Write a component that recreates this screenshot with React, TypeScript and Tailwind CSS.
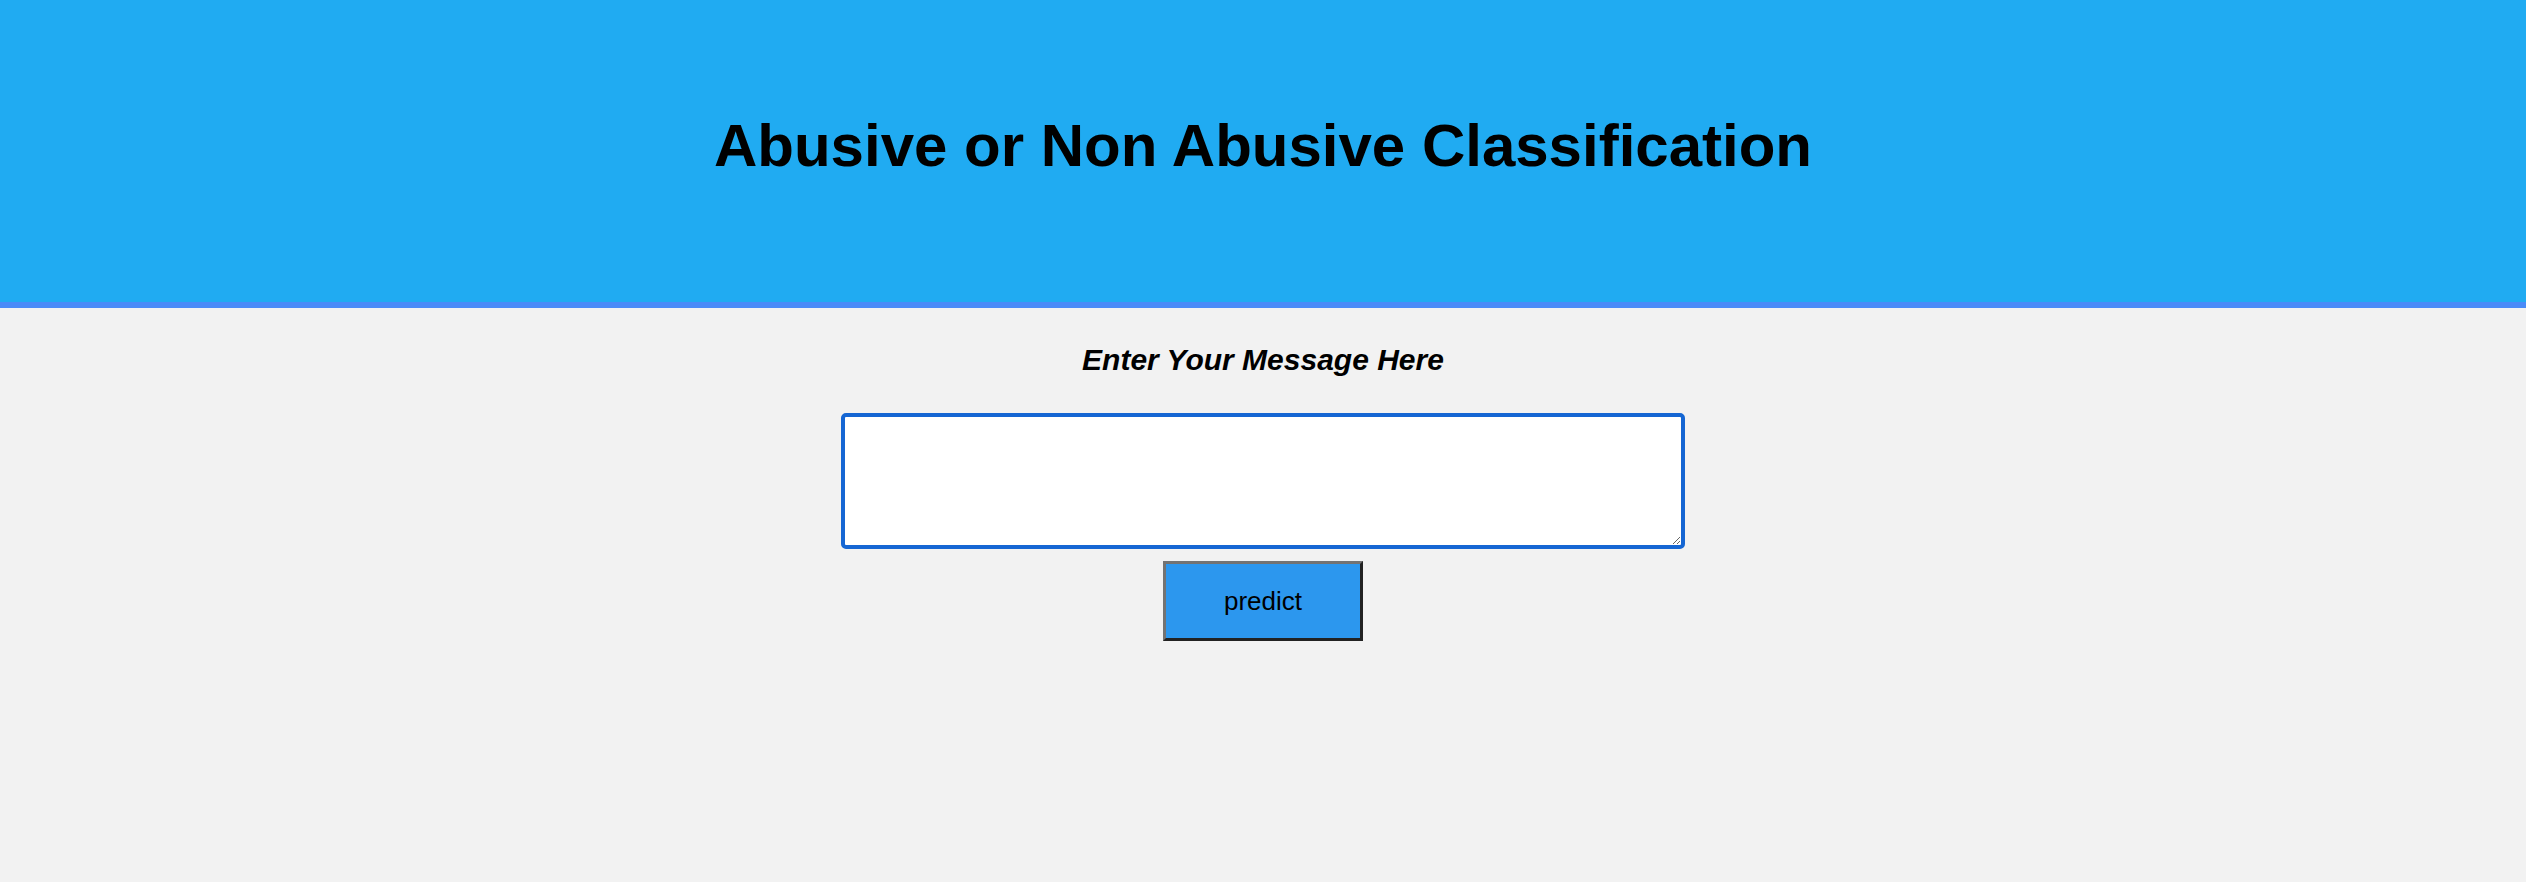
export default function App() {
  return (
    <div className="min-h-[882px] bg-[#f2f2f2] font-['Liberation_Sans',Arial,sans-serif] text-black">
      <header className="h-[308px] border-b-[6px] border-[#4a8bf8] bg-[#20abf2] pt-[111px] text-center">
        <h1 className="text-[60px] font-bold leading-[69px]">
          Abusive or Non Abusive Classification
        </h1>
      </header>

      <main className="flex flex-col items-center">
        <h2 className="mt-[35px] text-[30px] font-bold italic leading-[34px]">
          Enter Your Message Here
        </h2>
        <form className="mt-[36px] flex flex-col items-center gap-3">
          <textarea
            className="h-[136px] w-[844px] resize rounded-[5px] border-4 border-[#1566d3] bg-white p-2 text-[20px] outline-none"
          ></textarea>
          <button
            type="button"
            className="h-[80px] w-[200px] border-[3px] border-t-[#737373] border-l-[#737373] border-r-[#222222] border-b-[#222222] bg-[#2c97ee] text-[26px]"
          >
            predict
          </button>
        </form>
      </main>
    </div>
  );
}
